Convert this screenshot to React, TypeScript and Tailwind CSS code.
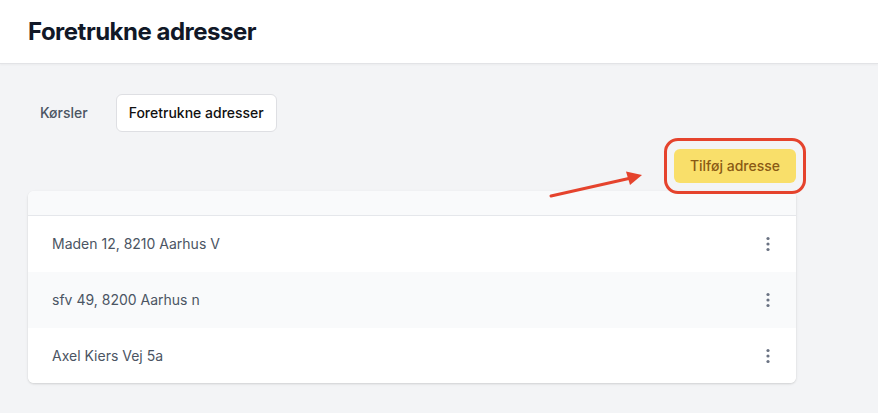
import React from "react";

function Dots() {
  return (
    <svg width="6" height="16" viewBox="0 0 6 16" className="text-gray-500" fill="currentColor">
      <circle cx="3" cy="2.5" r="1.6" />
      <circle cx="3" cy="8" r="1.6" />
      <circle cx="3" cy="13.5" r="1.6" />
    </svg>
  );
}

const rows = ["Maden 12, 8210 Aarhus V", "sfv 49, 8200 Aarhus n", "Axel Kiers Vej 5a"];

export default function App() {
  return (
    <div className="min-h-[413px] bg-[#f3f4f6]" style={{ fontFamily: "Inter, 'Liberation Sans', sans-serif" }}>
      <header className="h-[64px] bg-white border-b border-[#e2e3e6] shadow-[0_1px_2px_rgba(0,0,0,0.04)] px-7 flex items-center">
        <h1 className="text-[24px] font-bold text-[#111827] tracking-[-0.5px]">Foretrukne adresser</h1>
      </header>
      <main className="px-7 pt-[30px]">
        <nav className="flex items-center gap-4">
          <span className="px-3 py-2 text-sm font-medium text-[#4b5563]">Kørsler</span>
          <span className="px-3 py-2 text-sm font-medium text-[#111] bg-white border border-[#dedfe3] rounded-md">Foretrukne adresser</span>
        </nav>
        <div className="w-[768px]">
          <div className="flex justify-end mt-[17px]">
            <div className="relative">
              <button className="bg-[#f9df6a] text-[#8a5a14] text-sm font-medium rounded-md px-4 py-[7px]">Tilføj adresse</button>
              <div className="absolute -left-[10px] -right-[10px] -top-[11px] -bottom-[11px] border-[3px] border-[#e5432d] rounded-[14px] pointer-events-none" />
              <svg className="absolute pointer-events-none" style={{ left: -125, top: 22 }} width="100" height="30" viewBox="0 0 100 30">
                <line x1="2" y1="25" x2="82" y2="7" stroke="#e5432d" strokeWidth="3" strokeLinecap="round" />
                <polygon points="93,4 77,0.5 81,14" fill="#e5432d" />
              </svg>
            </div>
          </div>
          <div className="mt-2 bg-white rounded-md shadow-[0_1px_3px_rgba(0,0,0,0.1),0_1px_2px_rgba(0,0,0,0.06)] overflow-hidden">
            <div className="h-[25px] bg-[#f9fafb] border-b border-[#e5e7eb]" />
            {rows.map((r, i) => (
              <div key={r} className={`${i === 2 ? "h-[55px]" : "h-[56px]"} flex items-center justify-between pl-6 pr-[25px] ${i === 1 ? "bg-[#f9fafb]" : "bg-white"}`}>
                <span className="text-sm text-[#4b5563]">{r}</span>
                <Dots />
              </div>
            ))}
          </div>
        </div>
      </main>
    </div>
  );
}
